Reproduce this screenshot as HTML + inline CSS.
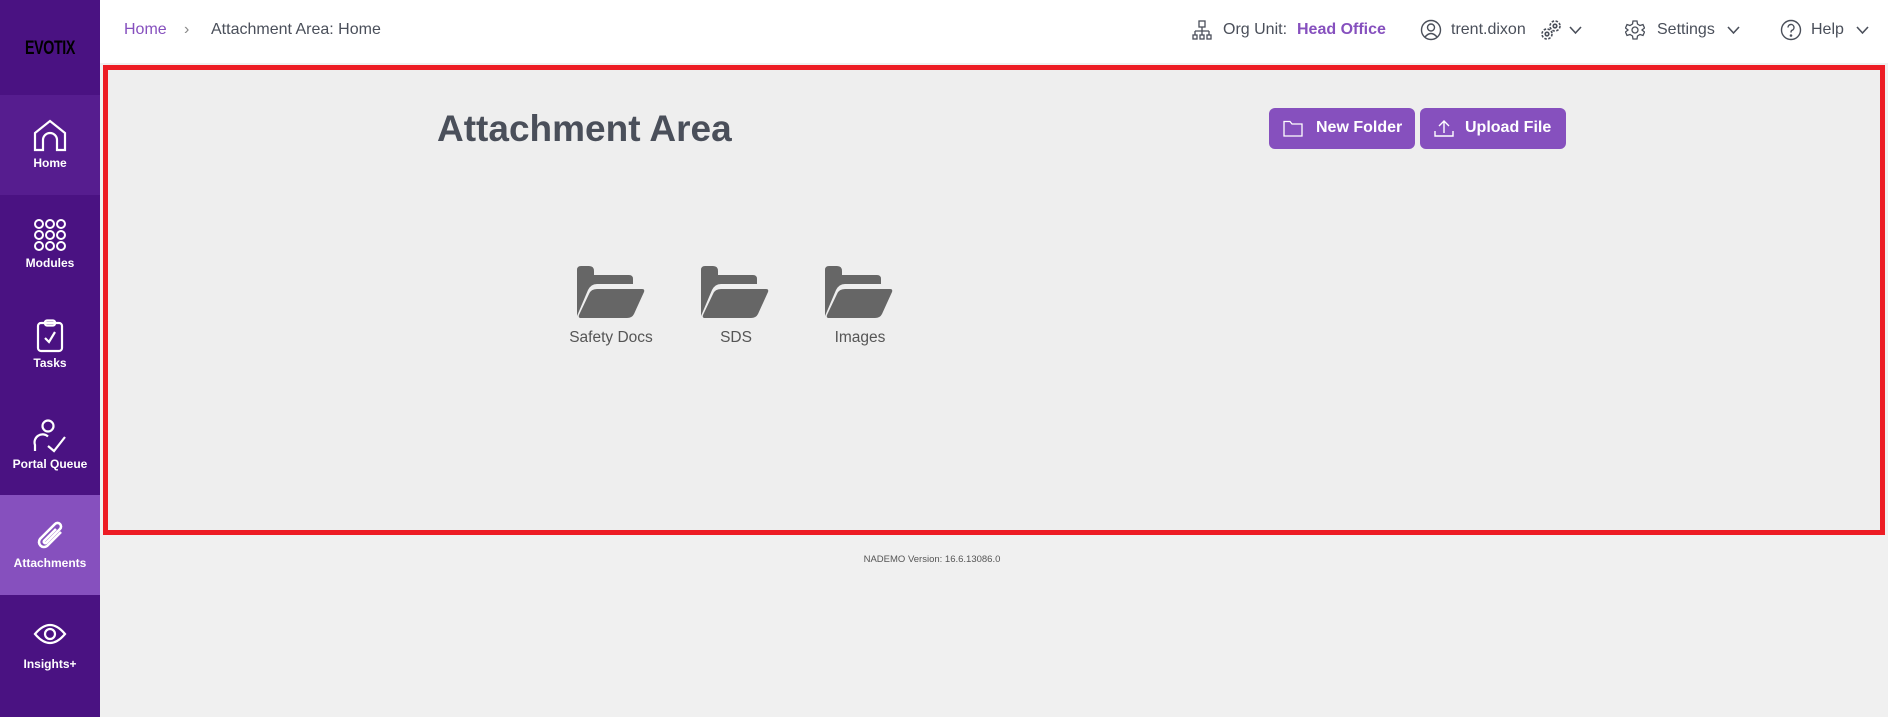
<!DOCTYPE html>
<html><head><meta charset="utf-8"><style>
*{margin:0;padding:0;box-sizing:border-box}
body{width:1888px;height:717px;background:#f0f0f0;font-family:"Liberation Sans",sans-serif;position:relative;overflow:hidden}
.a{position:absolute}
#side{left:0;top:0;width:100px;height:717px;background:#4a1282}
.it{position:absolute;left:0;width:100px;height:100px}
.it svg{position:absolute;left:50%;transform:translateX(-50%)}
.lb{position:absolute;width:100px;text-align:center;color:#fff;font-size:12px;font-weight:bold}
#hdr{left:100px;top:0;width:1788px;height:63px;background:#fff}
.t{position:absolute;font-size:16px;color:#4a4f5a;line-height:20px;top:20px;white-space:nowrap}
.btn{position:absolute;top:108px;height:41px;background:#8650be;border-radius:6px;color:#fff;font-weight:bold;font-size:16px}
.btn span{position:absolute;top:11px}
.fl{position:absolute;top:266px}
.fn{position:absolute;top:329px;font-size:15.5px;color:#555;text-align:center;width:140px}
</style></head><body>
<div id="side" class="a">
<div class="a" style="left:0;top:38px;width:100px;text-align:center;font-weight:bold;font-size:19px;letter-spacing:-0.5px;color:#000;transform:scaleX(0.75)">EVOTIX</div>
<div class="it" style="top:95px;background:#561d8f">
<svg style="top:24px" width="34" height="33" viewBox="0 0 34 33" fill="none" stroke="#fff" stroke-width="2.2"><path d="M2 31V14L17 2L32 14V31H24V21A7 7 0 0 0 10 21V31Z"/></svg>
<div class="lb" style="top:61px">Home</div></div>
<div class="it" style="top:195px">
<svg style="top:24px" width="34" height="32" viewBox="0 0 34 32" fill="none" stroke="#fff" stroke-width="2"><g><circle cx="6" cy="5" r="4"/><circle cx="17" cy="5" r="4"/><circle cx="28" cy="5" r="4"/><circle cx="6" cy="16" r="4"/><circle cx="17" cy="16" r="4"/><circle cx="28" cy="16" r="4"/><circle cx="6" cy="27" r="4"/><circle cx="17" cy="27" r="4"/><circle cx="28" cy="27" r="4"/></g></svg>
<div class="lb" style="top:61px">Modules</div></div>
<div class="it" style="top:295px">
<svg style="top:24px" width="28" height="34" viewBox="0 0 28 34" fill="none" stroke="#fff" stroke-width="2.2"><rect x="2" y="4" width="24" height="28" rx="3"/><rect x="9" y="1.5" width="10" height="5" rx="2"/><path d="M9 19L13 23L19 13"/></svg>
<div class="lb" style="top:61px">Tasks</div></div>
<div class="it" style="top:395px">
<svg style="top:24px" width="34" height="34" viewBox="0 0 34 34" fill="none" stroke="#fff" stroke-width="2.2"><circle cx="15" cy="7" r="5.5"/><path d="M2 32V26A8 8 0 0 1 15 17.5M15 27L21 32L32 18"/></svg>
<div class="lb" style="top:62px">Portal Queue</div></div>
<div class="it" style="top:495px;background:#8650be">
<svg style="top:25px" width="34" height="34" viewBox="0 0 34 34" fill="none" stroke="#fff" stroke-width="2.6"><path d="M28 12L14 26A5 5 0 0 1 7 19L22 4A3.5 3.5 0 0 1 27 9L13 23A1.5 1.5 0 0 1 11 21L23 9"/></svg>
<div class="lb" style="top:61px">Attachments</div></div>
<div class="it" style="top:594px">
<svg style="top:28px" width="34" height="24" viewBox="0 0 34 24" fill="none" stroke="#fff" stroke-width="2.2"><path d="M2 12Q17 -6 32 12Q17 30 2 12Z"/><circle cx="17" cy="12" r="5"/></svg>
<div class="lb" style="top:63px">Insights+</div></div>
</div>
<div id="hdr" class="a"></div>
<div class="t" style="left:124px;color:#8650be">Home</div>
<div class="t" style="left:184px;color:#888">›</div>
<div class="t" style="left:211px">Attachment Area: Home</div>
<svg class="a" style="left:1192px;top:20px" width="20" height="22" viewBox="0 0 20 22" fill="none" stroke="#4a4f5a" stroke-width="1.3"><rect x="7" y="1" width="6" height="6"/><path d="M10 7V11M3 11H17M3 11V15M10 11V15M17 11V15"/><rect x="1" y="15" width="4" height="4"/><rect x="8" y="15" width="4" height="4"/><rect x="15" y="15" width="4" height="4"/></svg>
<div class="t" style="left:1223px">Org Unit:</div>
<div class="t" style="left:1297px;color:#8650be;font-weight:bold">Head Office</div>
<svg class="a" style="left:1420px;top:19px" width="22" height="22" viewBox="0 0 22 22" fill="none" stroke="#4a4f5a" stroke-width="1.4"><circle cx="11" cy="11" r="9.5"/><circle cx="11" cy="8.5" r="3.5"/><path d="M5 18Q11 11 17 18"/></svg>
<div class="t" style="left:1451px">trent.dixon</div>
<svg class="a" style="left:1540px;top:19px" width="22" height="22" viewBox="0 0 22 22" fill="none" stroke="#4a4f5a" stroke-width="1.6"><circle cx="7" cy="15" r="5" stroke-dasharray="2.5 1.5"/><circle cx="7" cy="15" r="1.8"/><circle cx="15" cy="7" r="5" stroke-dasharray="2.5 1.5"/><circle cx="15" cy="7" r="1.8"/></svg>
<svg class="a" style="left:1569px;top:26px" width="13" height="9" viewBox="0 0 13 9" fill="none" stroke="#4a4f5a" stroke-width="1.6"><path d="M1 1L6.5 7L12 1"/></svg>
<svg class="a" style="left:1625px;top:20px" width="20" height="20" viewBox="0 0 20 20" fill="none" stroke="#4a4f5a" stroke-width="1.3"><path d="M8 1H12L12.5 4L15 5.5L18 4.5L19.5 8L17 10L19.5 12L18 15.5L15 14.5L12.5 16L12 19H8L7.5 16L5 14.5L2 15.5L0.5 12L3 10L0.5 8L2 4.5L5 5.5L7.5 4Z"/><circle cx="10" cy="10" r="3"/></svg>
<div class="t" style="left:1657px">Settings</div>
<svg class="a" style="left:1727px;top:26px" width="13" height="9" viewBox="0 0 13 9" fill="none" stroke="#4a4f5a" stroke-width="1.6"><path d="M1 1L6.5 7L12 1"/></svg>
<svg class="a" style="left:1780px;top:19px" width="22" height="22" viewBox="0 0 22 22" fill="none" stroke="#4a4f5a" stroke-width="1.4"><circle cx="11" cy="11" r="9.5"/><path d="M8 8.5A3 3 0 1 1 12 11.3C11 11.8 11 12.5 11 13.5"/><circle cx="11" cy="16.5" r="0.6" fill="#4a4f5a"/></svg>
<div class="t" style="left:1811px">Help</div>
<svg class="a" style="left:1856px;top:26px" width="13" height="9" viewBox="0 0 13 9" fill="none" stroke="#4a4f5a" stroke-width="1.6"><path d="M1 1L6.5 7L12 1"/></svg>

<div class="a" style="left:103px;top:65px;width:1782px;height:470px;border:5px solid #ed1c24;background:#eeeeee"></div>
<div class="a" style="left:437px;top:107px;font-size:37px;font-weight:bold;color:#4a4f5a;line-height:44px">Attachment Area</div>
<div class="btn" style="left:1269px;width:146px">
<svg class="a" style="left:14px;top:12px" width="20" height="17" viewBox="0 0 20 17" fill="none" stroke="#fff" stroke-width="1.3"><path d="M1 2V16H19V4H9L7 1.5H1Z"/></svg>
<span style="left:47px">New Folder</span></div>
<div class="btn" style="left:1420px;width:146px">
<svg class="a" style="left:14px;top:11px" width="20" height="19" viewBox="0 0 20 19" fill="none" stroke="#fff" stroke-width="1.4"><path d="M1 12V17H19V12M10 14V2M5 7L10 2L15 7"/></svg>
<span style="left:45px">Upload File</span></div>

<svg class="fl" style="left:577px" width="68" height="52" viewBox="0 0 68 52"><path d="M4 0H12Q17 0 17 5V9H52Q56 9 56 13V18H20Q14 18 11 24L0 50V4Q0 0 4 0Z" fill="#666"/><path d="M20 23H65Q68 23 67 26L57 48Q55 52 50 52H4Q1 52 2 49L12 28Q14 23 20 23Z" fill="#666"/></svg>
<svg class="fl" style="left:701px" width="68" height="52" viewBox="0 0 68 52"><path d="M4 0H12Q17 0 17 5V9H52Q56 9 56 13V18H20Q14 18 11 24L0 50V4Q0 0 4 0Z" fill="#666"/><path d="M20 23H65Q68 23 67 26L57 48Q55 52 50 52H4Q1 52 2 49L12 28Q14 23 20 23Z" fill="#666"/></svg>
<svg class="fl" style="left:825px" width="68" height="52" viewBox="0 0 68 52"><path d="M4 0H12Q17 0 17 5V9H52Q56 9 56 13V18H20Q14 18 11 24L0 50V4Q0 0 4 0Z" fill="#666"/><path d="M20 23H65Q68 23 67 26L57 48Q55 52 50 52H4Q1 52 2 49L12 28Q14 23 20 23Z" fill="#666"/></svg>
<div class="fn" style="left:541px">Safety Docs</div>
<div class="fn" style="left:666px">SDS</div>
<div class="fn" style="left:790px">Images</div>
<div class="a" style="left:832px;top:554px;width:200px;text-align:center;font-size:9.5px;color:#555">NADEMO Version: 16.6.13086.0</div>
</body></html>
